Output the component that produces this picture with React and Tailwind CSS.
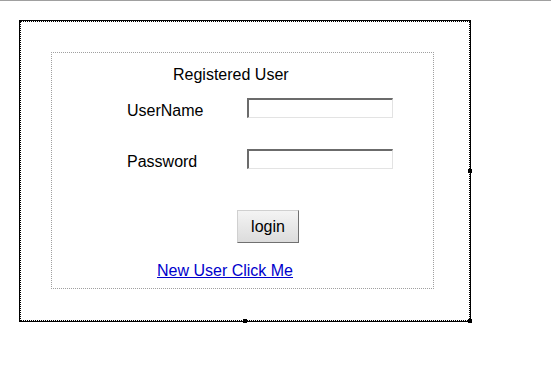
const Handle = ({ className }) => (
  <span className={`absolute w-[4px] h-[4px] bg-black ${className}`} />
);

const Field = ({ label, type }) => (
  <div className="flex items-start h-[20px]">
    <span className="w-[120px] mt-[4px] leading-[18px]">{label}</span>
    <input
      type={type}
      className="w-[146px] h-[20px] bg-white border-t-2 border-l-2 border-b border-r border-t-[#6b6b6b] border-l-[#6b6b6b] border-b-[#e3e3e3] border-r-[#e3e3e3] px-1 text-[13px] outline-none"
    />
  </div>
);

export default function App() {
  return (
    <div
      className="min-h-screen bg-white border-t border-[#a0a0a0] text-black text-[16px]"
      style={{ fontFamily: '"Liberation Sans", Arial, sans-serif' }}
    >
      <div className="relative ml-[19px] mt-[19px] w-[452px] h-[302px] border border-black">
        <div className="h-full border border-dotted border-black pl-[30px] pt-[30px]">
          <div className="w-[383px] h-[237px] border border-dotted border-[#a0a0a0] pt-[13px]">
            <div className="pl-[121px] leading-[18px]">Registered User</div>

            <div className="pl-[75px] mt-[14px] flex flex-col gap-[31px]">
              <Field label="UserName" type="text" />
              <Field label="Password" type="password" />
            </div>

            <div className="pl-[185px] mt-[41px]">
              <button
                type="button"
                className="w-[62px] h-[33px] border border-t-[#d0d0d0] border-l-[#d0d0d0] border-b-[#707070] border-r-[#707070] bg-gradient-to-b from-[#f4f4f4] to-[#dcdcdc] leading-[18px]"
              >
                login
              </button>
            </div>

            <div className="pl-[105px] mt-[19px] leading-[18px]">
              <a href="#" className="text-[#0000cc] underline">
                New User Click Me
              </a>
            </div>
          </div>
        </div>

        <Handle className="top-[148px] right-[-2px]" />
        <Handle className="bottom-[-2px] left-[223px]" />
        <Handle className="bottom-[-2px] right-[-2px]" />
      </div>
    </div>
  );
}
